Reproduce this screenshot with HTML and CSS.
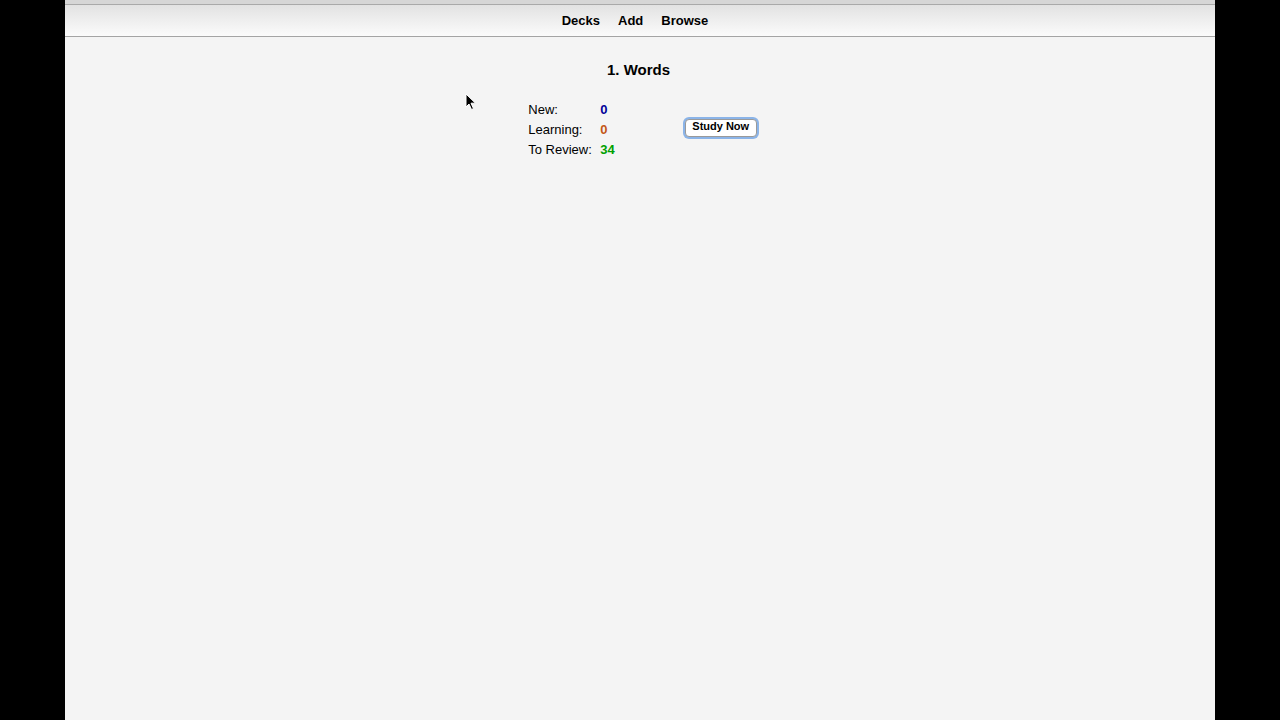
FILE: index.html
```html
<!DOCTYPE html>
<html lang="en">
<head>
    <meta charset="UTF-8">
    <title>Anki - Overview</title>
    <link rel="stylesheet" href="styles.css">
</head>
<body>

    <div class="window">
        <div class="titlebar"></div>

        <div class="toolbar">
            <a href="#">Decks</a>
            <a href="#">Add</a>
            <a href="#">Browse</a>
        </div>

        <div class="overview">
            <h3>1. Words</h3>

            <div class="deck-info">
                <table class="counts">
                    <tr><td>New:</td><td class="new-count">0</td></tr>
                    <tr><td>Learning:</td><td class="learn-count">0</td></tr>
                    <tr><td>To Review:</td><td class="review-count">34</td></tr>
                </table>
                <button type="button" class="study-btn">Study Now</button>
            </div>

            <svg class="cursor" width="12" height="18" viewBox="0 0 12 18">
                <path d="M1 1 L1 14 L4 11 L6.5 16.5 L8.5 15.6 L6 10.2 L10.5 10.2 Z" fill="#000" stroke="#fff" stroke-width="1"/>
            </svg>
        </div>
    </div>

</body>
</html>
```

FILE: styles.css
```css
body {
    margin: 0;
    padding: 0;
    background-color: #000;
    font-family: 'Liberation Sans', Arial, sans-serif;
    height: 720px;
    overflow: hidden;
}

.window {
    width: 1150px;
    height: 720px;
    margin-left: 65px;
    background-color: #f4f4f4;
    display: flex;
    flex-direction: column;
}

.titlebar {
    height: 4px;
    background-color: #d6d6d6;
    border-bottom: 1px solid #a9a9a9;
}

.toolbar {
    height: 32px;
    box-sizing: border-box;
    display: flex;
    justify-content: center;
    align-items: center;
    gap: 18px;
    padding-right: 10px;
    padding-bottom: 1px;
    background: linear-gradient(#e2e2e2, #fbfbfb);
    border-bottom: 1px solid #a4a4a4;
}

.toolbar a {
    color: #000;
    text-decoration: none;
    font-weight: bold;
    font-size: 13px;
}

.overview {
    position: relative;
    flex: 1;
    display: flex;
    flex-direction: column;
    align-items: center;
}

.overview h3 {
    margin: 24px 0 0 0;
    font-size: 15px;
    font-weight: bold;
    padding-right: 3px;
}

.deck-info {
    display: flex;
    align-items: center;
    gap: 70px;
    margin-top: 21px;
    padding-left: 5px;
}

.counts {
    border-collapse: collapse;
    font-size: 13px;
}

.counts td {
    padding: 0;
    height: 20px;
}

.counts td:first-child {
    width: 72px;
}

.new-count,
.learn-count,
.review-count {
    font-weight: bold;
}

.new-count { color: #000099; }
.learn-count { color: #c35617; }
.review-count { color: #00a000; }

.study-btn {
    font-family: 'Liberation Sans', Arial, sans-serif;
    font-size: 11px;
    font-weight: bold;
    color: #000;
    background: #fff;
    padding: 0 6px 3px 6px;
    border: 1px solid #9a9a9a;
    border-radius: 4px;
    box-shadow: 0 0 0 2px #8bb4e8;
    height: 18px;
    width: 72px;
    line-height: 11px;
    margin-bottom: 3px;
}

.cursor {
    position: absolute;
    left: 400px;
    top: 56px;
}
```
